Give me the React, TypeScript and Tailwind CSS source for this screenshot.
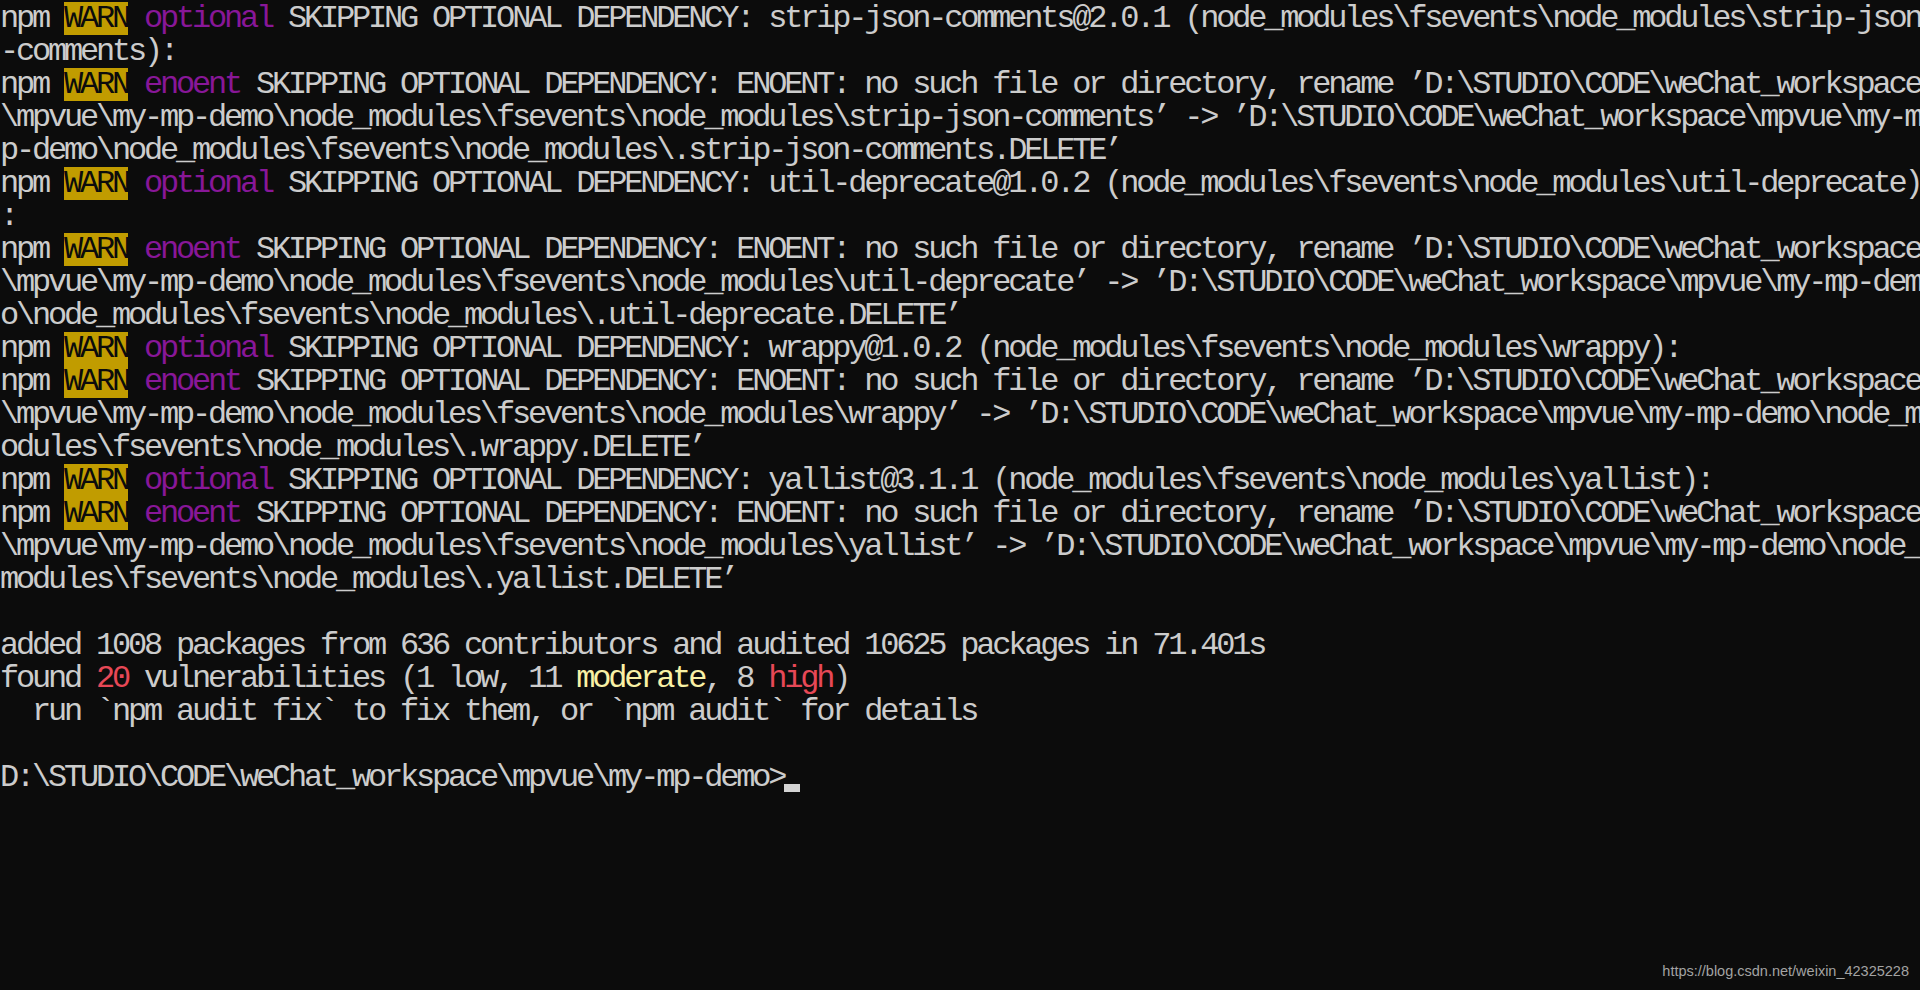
import React from "react";

type Tone = "txt" | "warn" | "mag" | "red" | "yel";
type Seg = [string, Tone?];

const toneClass: Record<Tone, string> = {
  txt: "text-[#cccccc]",
  warn: "inline-block bg-[#c19c00] text-[#0c0c0c]",
  mag: "text-[#881798]",
  red: "text-[#e74856]",
  yel: "text-[#f9f1a5]",
};

// npm WARN <kind> <rest>
const warn = (kind: string, rest: string): Seg[] => [
  ["npm "],
  ["WARN", "warn"],
  [" "],
  [kind, "mag"],
  [" " + rest],
];

const enoent = warn(
  "enoent",
  String.raw`SKIPPING OPTIONAL DEPENDENCY: ENOENT: no such file or directory, rename ’D:\STUDIO\CODE\weChat_workspace`
);

const rows: Seg[][] = [
  warn("optional", String.raw`SKIPPING OPTIONAL DEPENDENCY: strip-json-comments@2.0.1 (node_modules\fsevents\node_modules\strip-json`),
  [["-comments):"]],
  enoent,
  [[String.raw`\mpvue\my-mp-demo\node_modules\fsevents\node_modules\strip-json-comments’ -> ’D:\STUDIO\CODE\weChat_workspace\mpvue\my-m`]],
  [[String.raw`p-demo\node_modules\fsevents\node_modules\.strip-json-comments.DELETE’`]],
  warn("optional", String.raw`SKIPPING OPTIONAL DEPENDENCY: util-deprecate@1.0.2 (node_modules\fsevents\node_modules\util-deprecate)`),
  [[":"]],
  enoent,
  [[String.raw`\mpvue\my-mp-demo\node_modules\fsevents\node_modules\util-deprecate’ -> ’D:\STUDIO\CODE\weChat_workspace\mpvue\my-mp-dem`]],
  [[String.raw`o\node_modules\fsevents\node_modules\.util-deprecate.DELETE’`]],
  warn("optional", String.raw`SKIPPING OPTIONAL DEPENDENCY: wrappy@1.0.2 (node_modules\fsevents\node_modules\wrappy):`),
  enoent,
  [[String.raw`\mpvue\my-mp-demo\node_modules\fsevents\node_modules\wrappy’ -> ’D:\STUDIO\CODE\weChat_workspace\mpvue\my-mp-demo\node_m`]],
  [[String.raw`odules\fsevents\node_modules\.wrappy.DELETE’`]],
  warn("optional", String.raw`SKIPPING OPTIONAL DEPENDENCY: yallist@3.1.1 (node_modules\fsevents\node_modules\yallist):`),
  enoent,
  [[String.raw`\mpvue\my-mp-demo\node_modules\fsevents\node_modules\yallist’ -> ’D:\STUDIO\CODE\weChat_workspace\mpvue\my-mp-demo\node_`]],
  [[String.raw`modules\fsevents\node_modules\.yallist.DELETE’`]],
  [],
  [["added 1008 packages from 636 contributors and audited 10625 packages in 71.401s"]],
  [
    ["found "],
    ["20", "red"],
    [" vulnerabilities (1 low, 11 "],
    ["moderate", "yel"],
    [", 8 "],
    ["high", "red"],
    [")"],
  ],
  [["  run `npm audit fix` to fix them, or `npm audit` for details"]],
  [],
];

export default function App() {
  return (
    <div className="relative h-[990px] w-[1920px] overflow-hidden bg-[#0c0c0c]">
      <div className="whitespace-pre pt-[2px] font-['Liberation_Mono',monospace] text-[32px] leading-[33px] tracking-[-3.2px] text-[#cccccc]">
        {rows.map((row, i) => (
          <div key={i} className="h-[33px]">
            {row.map(([text, tone], j) => (
              <span key={j} className={toneClass[tone ?? "txt"]}>
                {text}
              </span>
            ))}
          </div>
        ))}

        {/* prompt + cursor */}
        <div className="h-[33px]">
          <span>{String.raw`D:\STUDIO\CODE\weChat_workspace\mpvue\my-mp-demo>`}</span>
          <span className="inline-flex h-[33px] w-4 items-end align-top">
            <span className="mb-[2px] h-[8px] w-full bg-[#d4d4d4]" />
          </span>
        </div>
      </div>

      {/* blog watermark */}
      <div className="absolute bottom-[12px] right-[11px] font-['Liberation_Sans',Arial,sans-serif] text-[14.5px] leading-none text-[#a3a3a3]">
        https://blog.csdn.net/weixin_42325228
      </div>
    </div>
  );
}
